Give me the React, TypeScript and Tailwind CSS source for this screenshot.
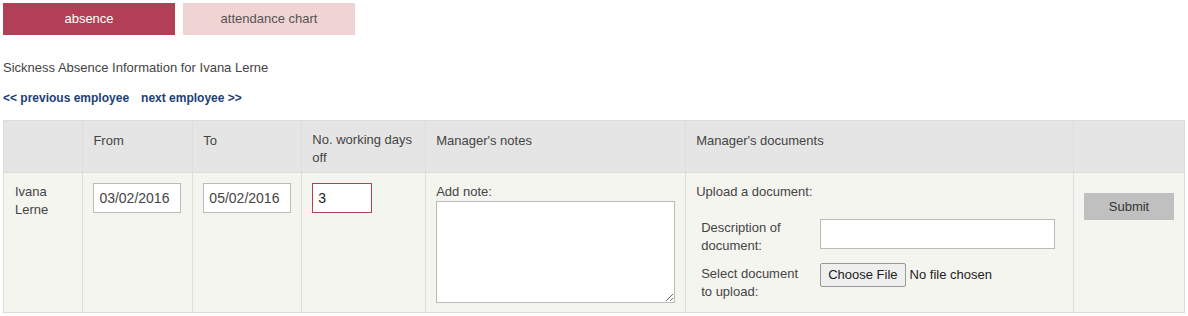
import React from "react";

const font = { fontFamily: '"Liberation Sans", Arial, sans-serif' };

export default function App() {
  return (
    <div className="bg-white text-[13px] text-[#444]" style={font}>
      <div className="flex gap-2 pl-[3px] pt-[3px]">
        <button className="h-8 w-[172px] bg-[#b23f55] text-[13px] text-white">absence</button>
        <button className="h-8 w-[172px] bg-[#f0d3d3] text-[13px] text-[#555]">attendance chart</button>
      </div>
      <p className="mt-[25px] pl-[3px] leading-4">Sickness Absence Information for Ivana Lerne</p>
      <div className="mt-[14px] flex gap-[12px] pl-[3px] text-[12px] font-bold leading-4 text-[#1c3f78]">
        <a href="#">&lt;&lt; previous employee</a>
        <a href="#">next employee &gt;&gt;</a>
      </div>
      <div className="mt-[14px] px-[3px]">
        <table className="w-full border-collapse border border-[#ddd] text-left">
          <thead>
            <tr className="h-[52px] bg-[#e5e5e5] align-top">
              <th className="w-[80px] border border-[#ddd]"></th>
              <th className="w-[110px] border border-[#ddd] px-[10px] pt-[10px] font-normal">From</th>
              <th className="w-[109px] border border-[#ddd] px-[10px] pt-[10px] font-normal">To</th>
              <th className="w-[125px] border border-[#ddd] px-[10px] pt-[10px] font-normal leading-[18px]">No. working days off</th>
              <th className="w-[259px] border border-[#ddd] px-[10px] pt-[10px] font-normal">Manager's notes</th>
              <th className="w-[388px] border border-[#ddd] px-[10px] pt-[10px] font-normal">Manager's documents</th>
              <th className="border border-[#ddd]"></th>
            </tr>
          </thead>
          <tbody>
            <tr className="h-[140px] bg-[#f5f5f0] align-top">
              <td className="border border-[#ddd] px-[11px] pt-[10px] leading-[18px]">Ivana<br />Lerne</td>
              <td className="border border-[#ddd] px-[10px] pt-[10px]">
                <input className="h-[30px] w-[88px] border border-[#bbb] bg-white px-[5px] text-[14px] text-[#444]" defaultValue="03/02/2016" />
              </td>
              <td className="border border-[#ddd] px-[10px] pt-[10px]">
                <input className="h-[30px] w-[88px] border border-[#bbb] bg-white px-[5px] text-[14px] text-[#444]" defaultValue="05/02/2016" />
              </td>
              <td className="border border-[#ddd] px-[10px] pt-[10px]">
                <input className="h-[30px] w-[60px] border border-[#b23f55] bg-white px-[5px] text-[14px] text-[#222]" defaultValue="3" />
              </td>
              <td className="border border-[#ddd] px-[10px] pt-[10px]">
                <div className="leading-[18px]">Add note:</div>
                <textarea className="block h-[102px] w-[239px] border border-[#bbb] bg-white" />
              </td>
              <td className="border border-[#ddd] px-[10px] pt-[10px]">
                <div className="leading-[18px]">Upload a document:</div>
                <div className="mt-[18px] flex items-start pl-[5px]">
                  <div className="w-[119px] leading-[18px]">Description of<br />document:</div>
                  <input className="h-[30px] w-[235px] border border-[#bbb] bg-white" />
                </div>
                <div className="mt-[10px] flex items-start pl-[5px]">
                  <div className="w-[119px] leading-[18px]">Select document<br />to upload:</div>
                  <div className="-mt-[2px] flex items-center gap-1 text-[13px] text-[#222]" style={{ fontFamily: "Arial, 'Liberation Sans', sans-serif" }}>
                    <span className="rounded-[2px] border border-[#999] bg-[#efefef] px-[7px] py-[1px]">Choose File</span>
                    <span>No file chosen</span>
                  </div>
                </div>
              </td>
              <td className="border border-[#ddd] px-[10px] pt-[20px]">
                <button className="h-[27px] w-[90px] bg-[#c0c0c0] text-[13px] text-[#333]">Submit</button>
              </td>
            </tr>
          </tbody>
        </table>
      </div>
    </div>
  );
}
